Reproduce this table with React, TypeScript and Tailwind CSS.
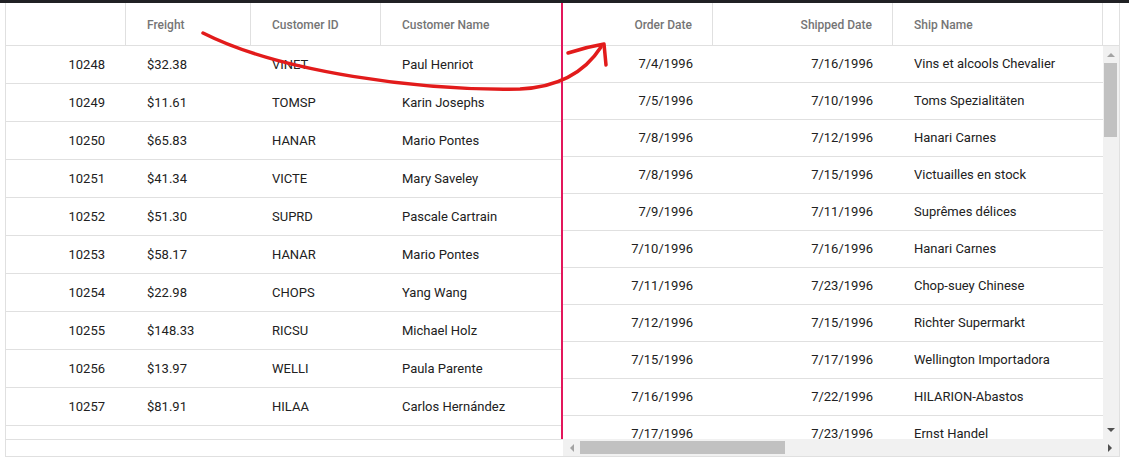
import React from "react";

type Row = { id: string; freight: string; cust: string; name: string; od: string; sd: string; ship: string };

const rows: Row[] = [
  { id: "10248", freight: "$32.38", cust: "VINET", name: "Paul Henriot", od: "7/4/1996", sd: "7/16/1996", ship: "Vins et alcools Chevalier" },
  { id: "10249", freight: "$11.61", cust: "TOMSP", name: "Karin Josephs", od: "7/5/1996", sd: "7/10/1996", ship: "Toms Spezialitäten" },
  { id: "10250", freight: "$65.83", cust: "HANAR", name: "Mario Pontes", od: "7/8/1996", sd: "7/12/1996", ship: "Hanari Carnes" },
  { id: "10251", freight: "$41.34", cust: "VICTE", name: "Mary Saveley", od: "7/8/1996", sd: "7/15/1996", ship: "Victuailles en stock" },
  { id: "10252", freight: "$51.30", cust: "SUPRD", name: "Pascale Cartrain", od: "7/9/1996", sd: "7/11/1996", ship: "Suprêmes délices" },
  { id: "10253", freight: "$58.17", cust: "HANAR", name: "Mario Pontes", od: "7/10/1996", sd: "7/16/1996", ship: "Hanari Carnes" },
  { id: "10254", freight: "$22.98", cust: "CHOPS", name: "Yang Wang", od: "7/11/1996", sd: "7/23/1996", ship: "Chop-suey Chinese" },
  { id: "10255", freight: "$148.33", cust: "RICSU", name: "Michael Holz", od: "7/12/1996", sd: "7/15/1996", ship: "Richter Supermarkt" },
  { id: "10256", freight: "$13.97", cust: "WELLI", name: "Paula Parente", od: "7/15/1996", sd: "7/17/1996", ship: "Wellington Importadora" },
  { id: "10257", freight: "$81.91", cust: "HILAA", name: "Carlos Hernández", od: "7/16/1996", sd: "7/22/1996", ship: "HILARION-Abastos" },
  { id: "10258", freight: "", cust: "", name: "", od: "7/17/1996", sd: "7/23/1996", ship: "Ernst Handel" },
];

export default function App() {
  return (
    <div className="relative w-[1129px] h-[464px] bg-white font-[Roboto,sans-serif] text-[#212121] overflow-hidden">
      <div className="h-[3px] bg-[#202124]" />
      <div className="ml-[5px] w-[1115px] border-x border-b border-[#e0e0e0] flex flex-col">
        <div className="flex h-[436px]">
          {/* Frozen left pane */}
          <div className="w-[555px] flex flex-col">
            <div className="flex h-[43px] pt-[2px] border-b border-[#e0e0e0] text-[12px] font-medium text-[#757575]">
              <div className="w-[120px] border-r border-[#e0e0e0] -mt-[2px]" />
              <div className="w-[125px] border-r border-[#e0e0e0] -mt-[2px] pt-[2px] flex items-center pl-[21px]">Freight</div>
              <div className="w-[130px] border-r border-[#e0e0e0] -mt-[2px] pt-[2px] flex items-center pl-[21px]">Customer ID</div>
              <div className="w-[180px] flex items-center pl-[21px]">Customer Name</div>
            </div>
            <div className="h-[393px] overflow-hidden text-[13px]">
              {rows.map((r, i) => (
                <div key={r.id} className="flex h-[38px] border-b border-[#e0e0e0] items-center">
                  <div className="w-[120px] text-right pr-[21px]">{i < 10 ? r.id : ""}</div>
                  <div className="w-[125px] pl-[21px]">{r.freight}</div>
                  <div className="w-[130px] pl-[21px]">{r.cust}</div>
                  <div className="w-[180px] pl-[21px]">{r.name}</div>
                </div>
              ))}
            </div>
          </div>
          {/* Frozen divider */}
          <div className="w-[2px] bg-[#e3165b]" />
          {/* Movable right pane */}
          <div className="w-[556px] flex flex-col">
            <div className="flex h-[43px] border-b border-[#e0e0e0] text-[12px] font-medium text-[#757575]">
              <div className="w-[150px] border-r border-[#e0e0e0] pt-[2px] flex items-center justify-end pr-[20px]">Order Date</div>
              <div className="w-[180px] border-r border-[#e0e0e0] pt-[2px] flex items-center justify-end pr-[20px]">Shipped Date</div>
              <div className="w-[210px] border-r border-[#e0e0e0] pt-[2px] flex items-center pl-[21px]">Ship Name</div>
              <div className="w-[16px]" />
            </div>
            <div className="flex h-[393px]">
              <div className="w-[540px] overflow-hidden text-[13px]">
                {rows.map((r) => (
                  <div key={r.id} className="flex h-[37px] border-b border-[#e0e0e0] items-center">
                    <div className="w-[150px] text-right pr-[20px]">{r.od}</div>
                    <div className="w-[180px] text-right pr-[20px]">{r.sd}</div>
                    <div className="w-[210px] pl-[21px]">{r.ship}</div>
                  </div>
                ))}
              </div>
              {/* vertical scrollbar */}
              <div className="w-[16px] bg-[#f1f1f1] flex flex-col items-start">
                <div className="h-[17px] w-[15px] flex items-center justify-center">
                  <svg width="8" height="5" viewBox="0 0 8 5"><path d="M0 5 L4 1 L8 5 Z" fill="#a3a3a3" /></svg>
                </div>
                <div className="ml-[1px] w-[13px] h-[74px] bg-[#c1c1c1]" />
                <div className="flex-1" />
                <div className="h-[17px] w-[15px] flex items-center justify-center">
                  <svg width="8" height="5" viewBox="0 0 8 5"><path d="M0 0 L8 0 L4 4 Z" fill="#505050" /></svg>
                </div>
              </div>
            </div>
          </div>
        </div>
        {/* bottom scroll row */}
        <div className="flex h-[17px]">
          <div className="w-[557px] border-t border-[#e0e0e0] bg-white" />
          <div className="w-[556px] bg-[#f1f1f1] flex items-center">
            <div className="w-[17px] h-[17px] flex items-center justify-center">
              <svg width="5" height="8" viewBox="0 0 5 8"><path d="M5 0 L5 8 L1 4 Z" fill="#a3a3a3" /></svg>
            </div>
            <div className="w-[205px] h-[13px] bg-[#c1c1c1]" />
            <div className="flex-1" />
            <div className="w-[17px] h-[17px] flex items-center justify-center">
              <svg width="5" height="8" viewBox="0 0 5 8"><path d="M0 0 L4 4 L0 8 Z" fill="#505050" /></svg>
            </div>
          </div>
        </div>
      </div>
      {/* red hand-drawn annotation */}
      <svg className="absolute left-0 top-0 pointer-events-none" width="1129" height="464" viewBox="0 0 1129 464">
        <path
          d="M203,33 C280,72 420,91 520,89 C560,87 585,72 601,47"
          fill="none"
          stroke="#e21b1b"
          strokeWidth="3.5"
          strokeLinecap="round"
        />
        <path
          d="M568,53 C580,49 592,46 604,44 L606,65"
          fill="none"
          stroke="#e21b1b"
          strokeWidth="3.5"
          strokeLinecap="round"
          strokeLinejoin="round"
        />
      </svg>
    </div>
  );
}
